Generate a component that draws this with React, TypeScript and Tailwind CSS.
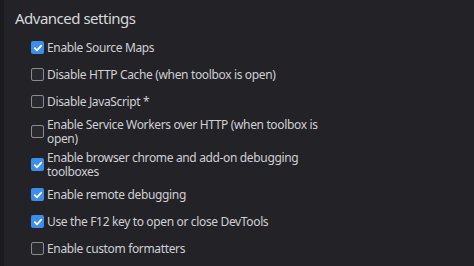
const items: { label: React.ReactNode; checked: boolean }[] = [
  { label: "Enable Source Maps", checked: true },
  { label: "Disable HTTP Cache (when toolbox is open)", checked: false },
  { label: "Disable JavaScript *", checked: false },
  {
    label: (
      <>
        Enable Service Workers over HTTP (when toolbox is
        <br />
        open)
      </>
    ),
    checked: false,
  },
  {
    label: (
      <>
        Enable browser chrome and add-on debugging
        <br />
        toolboxes
      </>
    ),
    checked: true,
  },
  { label: "Enable remote debugging", checked: true },
  { label: "Use the F12 key to open or close DevTools", checked: true },
  { label: "Enable custom formatters", checked: false },
];

function Box({ checked }: { checked: boolean }) {
  if (checked) {
    return (
      <span className="flex h-[13px] w-[13px] shrink-0 items-center justify-center rounded-[2px] bg-[#3d8ee8]">
        <svg width="10" height="10" viewBox="0 0 10 10" fill="none">
          <path d="M1.8 5.2 L4 7.4 L8.3 2.6" stroke="white" strokeWidth="1.8" strokeLinecap="round" strokeLinejoin="round" />
        </svg>
      </span>
    );
  }
  return <span className="h-[13px] w-[13px] shrink-0 rounded-[2px] border border-[#8a8a92] bg-[#2a2a2e]" />;
}

export default function App() {
  return (
    <div
      className="flex h-[266px] w-[474px] overflow-hidden bg-[#232327]"
      style={{ fontFamily: '"Noto Sans", "Open Sans", sans-serif' }}
    >
      <div className="w-[4px] shrink-0 bg-[#1b1b1f]" />
      <div className="flex-1 pl-[11px] pt-[8px]">
        <h2 className="text-[15px] leading-[20px] tracking-[-0.5px] text-[#d7d7db]">Advanced settings</h2>
        <ul className="mt-[9px] flex flex-col gap-[6px] pl-[16px]">
          {items.map((it, i) => (
            <li
              key={i}
              className="flex min-h-[21px] items-center gap-[3px] text-[12px] leading-[13.5px] tracking-[-0.35px] text-[#cfcfd4]"
            >
              <Box checked={it.checked} />
              <span>{it.label}</span>
            </li>
          ))}
        </ul>
      </div>
    </div>
  );
}
